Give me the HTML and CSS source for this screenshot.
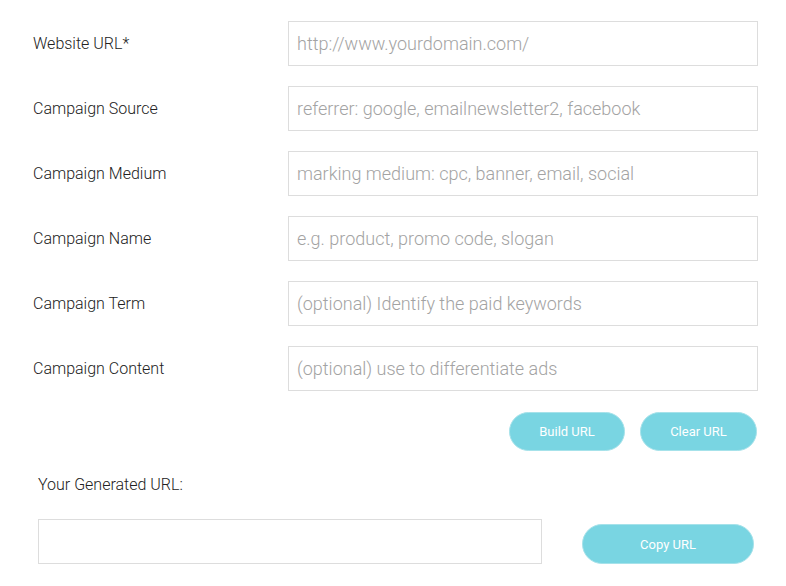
FILE: index.html
```html
<!DOCTYPE html>
<html>
<head>
<meta charset="utf-8">
<link rel="stylesheet" href="styles.css">
</head>
<body>
<div class="page">
  <form class="form">
    <label class="label">Website URL*</label>
    <input class="field" type="text" placeholder="http://www.yourdomain.com/">
    <label class="label">Campaign Source</label>
    <input class="field" type="text" placeholder="referrer: google, emailnewsletter2, facebook">
    <label class="label">Campaign Medium</label>
    <input class="field" type="text" placeholder="marking medium: cpc, banner, email, social">
    <label class="label">Campaign Name</label>
    <input class="field" type="text" placeholder="e.g. product, promo code, slogan">
    <label class="label">Campaign Term</label>
    <input class="field" type="text" placeholder="(optional) Identify the paid keywords">
    <label class="label">Campaign Content</label>
    <input class="field" type="text" placeholder="(optional) use to differentiate ads">
  </form>
  <div class="actions">
    <button class="btn btn-build" type="button">Build URL</button>
    <button class="btn btn-clear" type="button">Clear URL</button>
  </div>
  <div class="result">
    <div class="result-label">Your Generated URL:</div>
    <div class="result-row">
      <input class="output" type="text">
      <button class="btn btn-copy" type="button">Copy URL</button>
    </div>
  </div>
</div>
</body>
</html>
```

FILE: styles.css
```css
html, body {
  margin: 0;
  padding: 0;
  background: #ffffff;
}
body {
  font-family: Roboto, "Liberation Sans", sans-serif;
  color: #333333;
}
.page {
  width: 786px;
  height: 586px;
  box-sizing: border-box;
  padding-top: 21px;
}
.form {
  display: grid;
  grid-template-columns: 255px 470px;
  row-gap: 20px;
  padding-left: 33px;
  margin: 0;
}
.label {
  display: flex;
  align-items: center;
  font-size: 16px;
  font-weight: 300;
  color: #222222;
  height: 45px;
}
.field, .output {
  box-sizing: border-box;
  height: 45px;
  border: 1px solid #dddddd;
  border-radius: 0;
  padding: 0 8px;
  font-family: Roboto, "Liberation Sans", sans-serif;
  font-size: 18px;
  font-weight: 300;
  color: #333333;
  background: #ffffff;
  outline: none;
  margin: 0;
}
.field::placeholder {
  color: #a3a3a3;
  opacity: 1;
}
.actions {
  display: flex;
  justify-content: flex-end;
  gap: 15px;
  padding-right: 29px;
  margin-top: 21px;
}
.btn {
  font-family: Roboto, "Liberation Sans", sans-serif;
  font-size: 13px;
  font-weight: 400;
  color: #ffffff;
  background: #79d5e2;
  border: 1px solid #a6e2ea;
  border-radius: 20px;
  height: 39px;
  padding: 0;
  cursor: pointer;
}
.btn-build { width: 116px; }
.btn-clear { width: 117px; }
.result {
  padding-left: 38px;
  margin-top: 24px;
}
.result-label {
  font-size: 16px;
  font-weight: 300;
  line-height: 20px;
  color: #222222;
}
.result-row {
  display: flex;
  align-items: flex-start;
  margin-top: 24px;
}
.output {
  width: 504px;
}
.btn-copy {
  width: 172px;
  height: 40px;
  margin-left: 40px;
  margin-top: 5px;
}
```
